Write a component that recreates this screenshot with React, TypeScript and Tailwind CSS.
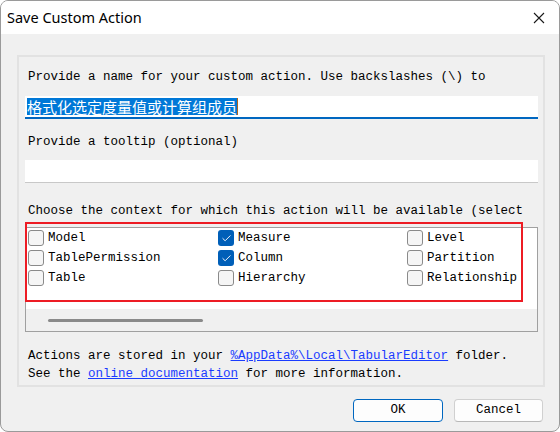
import { Check } from "lucide-react";

const mono = "font-['Liberation_Mono','DejaVu_Sans_Mono',monospace] text-[12.5px] text-black";

const items = [
  { label: "Model", checked: false },
  { label: "Measure", checked: true },
  { label: "Level", checked: false },
  { label: "TablePermission", checked: false },
  { label: "Column", checked: true },
  { label: "Partition", checked: false },
  { label: "Table", checked: false },
  { label: "Hierarchy", checked: false },
  { label: "Relationship", checked: false },
];

function Box({ checked }: { checked: boolean }) {
  if (checked) {
    return (
      <span className="w-4 h-4 rounded-[3px] bg-[#005fb8] flex items-center justify-center shrink-0">
        <Check size={11} strokeWidth={2} className="text-white" />
      </span>
    );
  }
  return <span className="w-4 h-4 rounded-[3px] border border-[#8a8a8a] bg-[#f5f5f5] shrink-0" />;
}

export default function App() {
  return (
    <div className="w-[560px] h-[432px] bg-white overflow-hidden">
      <div className="h-full flex flex-col border border-[#9a9a9a] rounded-lg overflow-hidden bg-[#f0f0f0]">
        {/* Title bar */}
        <div className="h-[33px] bg-white flex items-center justify-between pl-[6px] pr-[14px] shrink-0">
          <span className="font-['Noto_Sans',sans-serif] text-[14.5px] text-black">Save Custom Action</span>
          <svg width="12" height="12" viewBox="0 0 12 12">
            <path d="M1 1 L11 11 M11 1 L1 11" stroke="#1a1a1a" strokeWidth="1.1" />
          </svg>
        </div>

        <div className="flex-1 flex flex-col pl-[16px] pr-[14px] pt-[21px]">
          {/* Panel */}
          <div className="h-[332px] border-2 border-[#e2e2e2] flex flex-col pl-[6px] pr-[5px] pt-[12px]">
            <div className={`${mono} h-4 leading-4 pl-[3px] whitespace-nowrap overflow-hidden`}>
              Provide a name for your custom action. Use backslashes (\) to
            </div>
            <div className="mt-[11px] h-[23px] bg-white border-b-2 border-[#0067c0] flex items-center pl-[2px]">
              <span className="font-['Noto_Sans_CJK_SC',sans-serif] text-[15px] leading-[17px] bg-[#0078d7] text-white">
                格式化选定度量值或计算组成员
              </span>
              <span className="w-px h-[17px] bg-[#b0651d]" />
            </div>

            <div className={`${mono} mt-[15px] h-4 leading-4 pl-[3px]`}>Provide a tooltip (optional)</div>
            <div className="mt-[10px] h-[23px] bg-white border-b border-[#c8c8c8]" />

            <div className={`${mono} mt-[20px] h-4 leading-4 pl-[3px] whitespace-nowrap overflow-hidden`}>
              Choose the context for which this action will be available (select
            </div>

            {/* Context list */}
            <div className="relative mt-[8px] h-[105px] border border-[#a0a0a0] bg-white flex flex-col">
              <div className="grid grid-cols-[190px_189px_1fr] pl-[2px]">
                {items.map((it) => (
                  <div key={it.label} className="h-5 flex items-center gap-[4px]">
                    <Box checked={it.checked} />
                    <span className={`${mono} leading-4`}>{it.label}</span>
                  </div>
                ))}
              </div>
              <div className="mt-auto h-[22px] bg-[#f0f0f0] flex items-center pl-[22px]">
                <div className="w-[155px] h-[3px] rounded-full bg-[#8a8a8a]" />
              </div>
              <div className="absolute -left-[1px] -top-[6px] w-[498px] h-[80px] border-2 border-[#ed1c24]" />
            </div>

            <div className={`${mono} mt-[15px] leading-[18px] pl-[3px] whitespace-nowrap`}>
              <div>
                Actions are stored in your{" "}
                <span className="text-[#1a3cff] underline">%AppData%\Local\TabularEditor</span> folder.
              </div>
              <div>
                See the <span className="text-[#1a3cff] underline">online documentation</span> for more information.
              </div>
            </div>
          </div>

          {/* Buttons */}
          <div className="mt-[12px] flex justify-end gap-[11px] pr-[2px]">
            <button className={`${mono} w-[90px] h-[23px] rounded-[4px] bg-[#fdfdfd] border border-[#0067c0]`}>OK</button>
            <button className={`${mono} w-[89px] h-[23px] rounded-[4px] bg-[#fdfdfd] border border-[#d0d0d0] border-b-[#b8b8b8]`}>
              Cancel
            </button>
          </div>
        </div>
      </div>
    </div>
  );
}
